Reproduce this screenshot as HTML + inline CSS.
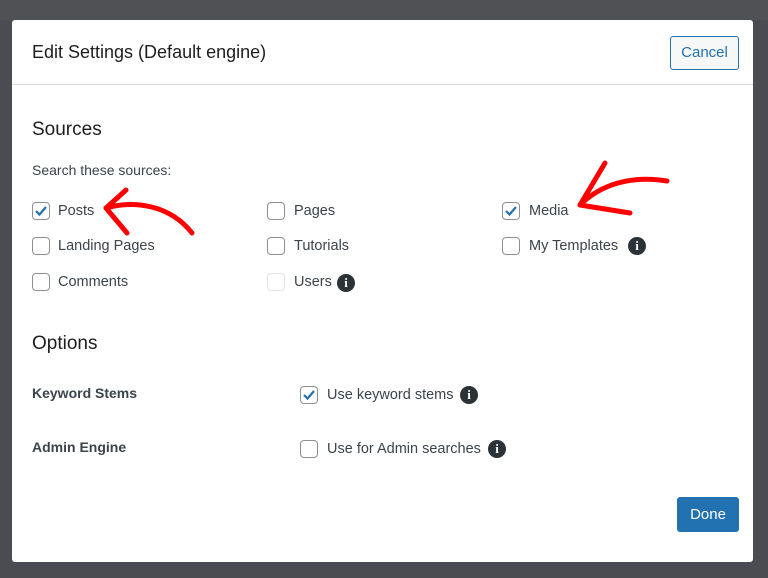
<!DOCTYPE html>
<html><head><style>
*{margin:0;padding:0;box-sizing:border-box}
body{width:768px;height:578px;background:#4b4c51;position:relative;overflow:hidden;font-family:"Liberation Sans",sans-serif;color:#1e1e1e}
.top{position:absolute;left:0;top:0;width:768px;height:20px;background:#505155}
.m{position:absolute;left:12px;top:20px;width:741px;height:542px;background:#fff;border-radius:3px}
.a{position:absolute;white-space:nowrap}
.cb{position:absolute;width:18px;height:18px;border:1px solid #8c8f94;border-radius:4px;background:#fff}
.cb.l{border-color:#e4e4e4}
.cb svg{position:absolute;left:0px;top:0px}
.t{font-size:14.5px;color:#3c434a}
.i{position:absolute;width:18px;height:18px;border-radius:50%;background:#2c3338;color:#fff;font:bold 13px/18px "Liberation Serif",serif;text-align:center}
.btn{position:absolute;border-radius:3px;font-size:15px;text-align:center}
</style></head><body>
<div class="top"></div>
<div class="m"></div>
<div class="a" style="left:32px;top:42px;font-size:18px">Edit Settings (Default engine)</div>
<div class="btn" style="left:670px;top:36px;width:69px;height:34px;border:1px solid #2271b1;color:#2271b1;background:#f6f7f7;line-height:32px">Cancel</div>
<div class="a" style="left:12px;top:84px;width:741px;height:1px;background:#dcdcde"></div>
<div class="a" style="left:32px;top:119px;font-size:19px">Sources</div>
<div class="a t" style="left:32px;top:162px;font-size:14px">Search these sources:</div>

<div class="cb" style="left:32px;top:202px"><svg width="16" height="16"><path d="M3 8l3.5 3.5L13 4" stroke="#2271b1" stroke-width="2.2" fill="none"/></svg></div><div class="a t" style="left:58px;top:203px">Posts</div>
<div class="cb" style="left:32px;top:237px"></div><div class="a t" style="left:58px;top:238px">Landing Pages</div>
<div class="cb" style="left:32px;top:273px"></div><div class="a t" style="left:58px;top:274px">Comments</div>
<div class="cb" style="left:267px;top:202px"></div><div class="a t" style="left:294px;top:203px">Pages</div>
<div class="cb" style="left:267px;top:237px"></div><div class="a t" style="left:294px;top:238px">Tutorials</div>
<div class="cb l" style="left:267px;top:273px"></div><div class="a t" style="left:294px;top:274px">Users</div><div class="i" style="left:337px;top:274px">i</div>
<div class="cb" style="left:502px;top:202px"><svg width="16" height="16"><path d="M3 8l3.5 3.5L13 4" stroke="#2271b1" stroke-width="2.2" fill="none"/></svg></div><div class="a t" style="left:529px;top:203px">Media</div>
<div class="cb" style="left:502px;top:237px"></div><div class="a t" style="left:529px;top:238px">My Templates</div><div class="i" style="left:628px;top:237px">i</div>

<div class="a" style="left:32px;top:333px;font-size:19px">Options</div>
<div class="a t" style="left:32px;top:385px;font-size:14px;font-weight:bold;color:#3c434a">Keyword Stems</div>
<div class="a t" style="left:32px;top:439px;font-size:14px;font-weight:bold;color:#3c434a">Admin Engine</div>
<div class="cb" style="left:300px;top:386px"><svg width="16" height="16"><path d="M3 8l3.5 3.5L13 4" stroke="#2271b1" stroke-width="2.2" fill="none"/></svg></div><div class="a t" style="left:327px;top:387px">Use keyword stems</div><div class="i" style="left:460px;top:386px">i</div>
<div class="cb" style="left:300px;top:440px"></div><div class="a t" style="left:327px;top:441px">Use for Admin searches</div><div class="i" style="left:488px;top:440px">i</div>

<div class="btn" style="left:677px;top:497px;width:62px;height:35px;background:#2271b1;color:#fff;line-height:35px">Done</div>

<svg class="a" style="left:0;top:0" width="768" height="578" fill="none" stroke="#f00" stroke-width="5" stroke-linecap="round" stroke-linejoin="round">
<path d="M106 208C135 200 170 205 192 233"/>
<path d="M126 190L106 208L127 233"/>
<path d="M580 205C600 185 630 175 667 181"/>
<path d="M605 163L580 205L630 213"/>
</svg>
</body></html>
